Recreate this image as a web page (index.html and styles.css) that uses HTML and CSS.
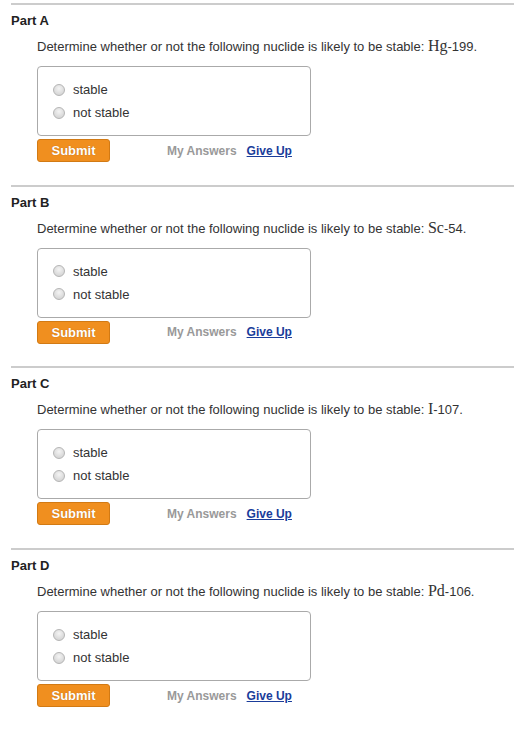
FILE: index.html
```html
<!DOCTYPE html>
<html lang="en">
<head>
    <meta charset="UTF-8">
    <meta name="viewport" content="width=device-width, initial-scale=1.0">
    <title>Nuclide Stability</title>
    <link rel="stylesheet" href="styles.css">
</head>
<body>
    <div class="part">
        <h2 class="part-title">Part A</h2>
        <p class="question">Determine whether or not the following nuclide is likely to be stable: <span class="sym">Hg</span>-199.</p>
        <div class="choices">
            <label class="choice"><input type="radio" name="a"> stable</label>
            <label class="choice"><input type="radio" name="a"> not stable</label>
        </div>
        <div class="actions">
            <button class="submit">Submit</button>
            <span class="my-answers">My Answers</span>
            <a href="#" class="give-up">Give Up</a>
        </div>
    </div>

    <div class="part">
        <h2 class="part-title">Part B</h2>
        <p class="question">Determine whether or not the following nuclide is likely to be stable: <span class="sym">Sc</span>-54.</p>
        <div class="choices">
            <label class="choice"><input type="radio" name="b"> stable</label>
            <label class="choice"><input type="radio" name="b"> not stable</label>
        </div>
        <div class="actions">
            <button class="submit">Submit</button>
            <span class="my-answers">My Answers</span>
            <a href="#" class="give-up">Give Up</a>
        </div>
    </div>

    <div class="part">
        <h2 class="part-title">Part C</h2>
        <p class="question">Determine whether or not the following nuclide is likely to be stable: <span class="sym">I</span>-107.</p>
        <div class="choices">
            <label class="choice"><input type="radio" name="c"> stable</label>
            <label class="choice"><input type="radio" name="c"> not stable</label>
        </div>
        <div class="actions">
            <button class="submit">Submit</button>
            <span class="my-answers">My Answers</span>
            <a href="#" class="give-up">Give Up</a>
        </div>
    </div>

    <div class="part">
        <h2 class="part-title">Part D</h2>
        <p class="question">Determine whether or not the following nuclide is likely to be stable: <span class="sym">Pd</span>-106.</p>
        <div class="choices">
            <label class="choice"><input type="radio" name="d"> stable</label>
            <label class="choice"><input type="radio" name="d"> not stable</label>
        </div>
        <div class="actions">
            <button class="submit">Submit</button>
            <span class="my-answers">My Answers</span>
            <a href="#" class="give-up">Give Up</a>
        </div>
    </div>
</body>
</html>
```

FILE: styles.css
```css
body {
    margin: 0;
    padding-top: 3px;
    font-family: "Liberation Sans", Arial, sans-serif;
    color: #333;
    background-color: #fff;
}
.part {
    margin-left: 11px;
    border-top: 2px solid #ccc;
    padding: 8px 0 22.7px 0;
}
.part-title {
    margin: 0;
    font-size: 13px;
    line-height: 16px;
    font-weight: bold;
    color: #222;
}
.question {
    margin: 9px 0 0 26px;
    font-size: 13px;
    line-height: 16px;
    color: #333;
}
.sym {
    font-family: "Liberation Serif", "Times New Roman", serif;
    font-size: 16px;
    line-height: 16px;
}
.choices {
    margin: 11px 0 0 26px;
    width: 244px;
    padding: 11px 14px;
    border: 1px solid #aaa;
    border-radius: 4px;
}
.choice {
    display: flex;
    align-items: center;
    height: 23px;
    font-size: 13px;
    color: #333;
}
.choice input {
    appearance: none;
    -webkit-appearance: none;
    width: 12px;
    height: 12px;
    margin: 0 8px 0 1px;
    border: 1px solid #b5b5b5;
    border-radius: 50%;
    background: radial-gradient(circle at 50% 35%, #f4f4f4 0%, #dcdcdc 60%, #cfcfcf 100%);
}
.actions {
    display: flex;
    align-items: center;
    height: 23px;
    margin: 3px 0 0 26px;
    font-size: 12px;
    font-weight: bold;
}
.submit {
    width: 73px;
    height: 23px;
    padding: 0;
    border: 1px solid #d27a14;
    border-radius: 3px;
    background-color: #f08f1f;
    color: #fff;
    font-family: "Liberation Sans", Arial, sans-serif;
    font-size: 13px;
    font-weight: bold;
    text-shadow: 0 0 1px rgba(120, 60, 0, 0.5);
}
.my-answers {
    margin-left: 57px;
    color: #999;
}
.give-up {
    margin-left: 10px;
    color: #1a3c9a;
    text-decoration: underline;
}
```
